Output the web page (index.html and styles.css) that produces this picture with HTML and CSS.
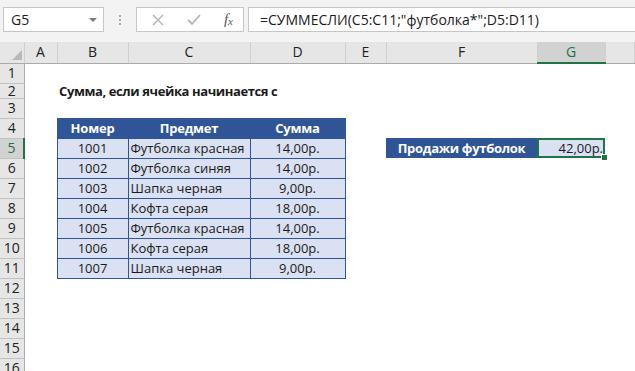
FILE: index.html
```html
<!DOCTYPE html>
<html lang="ru">
<head>
  <meta charset="UTF-8">
  <title>СУММЕСЛИ — начинается с</title>
  <link rel="stylesheet" href="styles.css">
</head>
<body>
  <div class="toolbar">
    <div class="namebox">
      <span>G5</span>
      <span class="caret"></span>
    </div>
    <div class="grip"><i></i><i></i><i></i></div>
    <div class="fbtns">
      <svg width="14" height="14" viewBox="0 0 14 14"><path d="M2 2 L12 12 M12 2 L2 12" stroke="#b4b4b4" stroke-width="1.4" fill="none"/></svg>
      <svg width="16" height="14" viewBox="0 0 16 14"><path d="M2 7 L6 11 L14 2" stroke="#b4b4b4" stroke-width="1.8" fill="none"/></svg>
      <span class="fx">f<sub>x</sub></span>
    </div>
    <div class="formula">=СУММЕСЛИ(C5:C11;"футболка*";D5:D11)</div>
  </div>

  <table class="sheet">
    <colgroup>
      <col class="c-rh">
      <col class="c-a">
      <col class="c-b">
      <col class="c-c">
      <col class="c-d">
      <col class="c-e">
      <col class="c-f">
      <col class="c-g">
      <col>
    </colgroup>
    <thead>
      <tr>
        <th class="corner"><span class="tri"></span></th>
        <th>A</th><th>B</th><th>C</th><th>D</th><th>E</th><th>F</th><th class="active">G</th><th></th>
      </tr>
    </thead>
    <tbody>
      <tr><th>1</th><td></td><td></td><td></td><td></td><td></td><td></td><td></td><td></td></tr>
      <tr class="short"><th>2</th><td></td><td class="title" colspan="3">Сумма, если ячейка начинается с</td><td></td><td></td><td></td><td></td></tr>
      <tr><th>3</th><td></td><td></td><td></td><td></td><td></td><td></td><td></td><td></td></tr>
      <tr><th>4</th><td></td><td class="t hd">Номер</td><td class="t hd">Предмет</td><td class="t hd">Сумма</td><td></td><td></td><td></td><td></td></tr>
      <tr><th class="active">5</th><td></td><td class="t ctr">1001</td><td class="t">Футболка красная</td><td class="t ctr">14,00р.</td><td></td><td class="label">Продажи футболок</td><td class="result">42,00р.<span class="handle"></span></td><td></td></tr>
      <tr><th>6</th><td></td><td class="t ctr">1002</td><td class="t">Футболка синяя</td><td class="t ctr">14,00р.</td><td></td><td></td><td></td><td></td></tr>
      <tr><th>7</th><td></td><td class="t ctr">1003</td><td class="t">Шапка черная</td><td class="t ctr">9,00р.</td><td></td><td></td><td></td><td></td></tr>
      <tr><th>8</th><td></td><td class="t ctr">1004</td><td class="t">Кофта серая</td><td class="t ctr">18,00р.</td><td></td><td></td><td></td><td></td></tr>
      <tr><th>9</th><td></td><td class="t ctr">1005</td><td class="t">Футболка красная</td><td class="t ctr">14,00р.</td><td></td><td></td><td></td><td></td></tr>
      <tr><th>10</th><td></td><td class="t ctr">1006</td><td class="t">Кофта серая</td><td class="t ctr">18,00р.</td><td></td><td></td><td></td><td></td></tr>
      <tr><th>11</th><td></td><td class="t ctr">1007</td><td class="t">Шапка черная</td><td class="t ctr">9,00р.</td><td></td><td></td><td></td><td></td></tr>
      <tr><th>12</th><td></td><td></td><td></td><td></td><td></td><td></td><td></td><td></td></tr>
      <tr><th>13</th><td></td><td></td><td></td><td></td><td></td><td></td><td></td><td></td></tr>
      <tr><th>14</th><td></td><td></td><td></td><td></td><td></td><td></td><td></td><td></td></tr>
      <tr><th>15</th><td></td><td></td><td></td><td></td><td></td><td></td><td></td><td></td></tr>
      <tr><th>16</th><td></td><td></td><td></td><td></td><td></td><td></td><td></td><td></td></tr>
    </tbody>
  </table>
</body>
</html>
```

FILE: styles.css
```css
body {
  margin: 0;
  width: 635px;
  height: 371px;
  overflow: hidden;
  background: #fff;
  font-family: "Open Sans", "Noto Sans", sans-serif;
  color: #1b1b1b;
}
.toolbar {
  height: 42px;
  background: #f3f3f3;
  display: flex;
  align-items: flex-start;
  padding-top: 7px;
  padding-left: 3px;
  box-sizing: border-box;
}
.namebox, .fbtns, .formula {
  height: 25px;
  background: #fff;
  border: 1px solid #c6c6c6;
  box-sizing: border-box;
  display: flex;
  align-items: center;
}
.namebox {
  width: 101px;
  padding: 0 6px 0 7px;
  justify-content: space-between;
  font-size: 14px;
}
.caret {
  width: 0;
  height: 0;
  border-left: 4px solid transparent;
  border-right: 4px solid transparent;
  border-top: 4px solid #7a7a7a;
}
.grip {
  width: 32px;
  height: 25px;
  display: flex;
  flex-direction: column;
  align-items: center;
  justify-content: center;
  gap: 2px;
}
.grip i {
  width: 2px;
  height: 2px;
  background: #a8a8a8;
}
.fbtns {
  width: 108px;
  padding: 0 10px 0 14px;
  justify-content: space-between;
}
.fx {
  font-family: "Liberation Serif", serif;
  font-style: italic;
  font-size: 15px;
  color: #555;
  line-height: 1;
}
.fx sub {
  font-size: 11px;
  vertical-align: -1px;
}
.formula {
  margin-left: 4px;
  flex: 1;
  border-right: none;
  padding-left: 11px;
  font-size: 14px;
  white-space: nowrap;
}

.sheet {
  border-collapse: collapse;
  table-layout: fixed;
  width: 635px;
  font-size: 13px;
}
.c-rh { width: 24px; }
.c-a { width: 33px; }
.c-b { width: 71px; }
.c-c { width: 122px; }
.c-d { width: 95px; }
.c-e { width: 41px; }
.c-f { width: 151px; }
.c-g { width: 68px; }

.sheet tr { height: 20px; }
.sheet tr.short { height: 15px; }
.sheet td, .sheet th {
  padding: 0 2px;
  white-space: nowrap;
  overflow: hidden;
  line-height: 14px;
}
.sheet tr.short th, .sheet tr.short td {
  line-height: 12px;
  overflow: visible;
}
.sheet thead th {
  background: #e6e6e6;
  border-right: 1px solid #d0d0d0;
  border-bottom: 1px solid #ababab;
  font-weight: normal;
  font-size: 14px;
  color: #222;
  height: 20px;
}
.sheet tbody th {
  background: #e6e6e6;
  border-right: 1px solid #ababab;
  border-bottom: 1px solid #c2c2c2;
  font-weight: normal;
  font-size: 14px;
  text-align: center;
  padding: 0;
  color: #222;
}
.sheet th.active {
  background: #d2d2d2;
  color: #217346;
}
.sheet thead th.active { border-bottom: 2px solid #217346; }
.sheet tbody th.active { border-right: 2px solid #217346; }
.corner {
  position: relative;
}
.tri {
  position: absolute;
  right: 2px;
  bottom: 3px;
  width: 0;
  height: 0;
  border-left: 10px solid transparent;
  border-bottom: 10px solid #b9b9b9;
}
.title {
  font-weight: bold;
  letter-spacing: -0.4px;
  padding-left: 4px;
}
.t {
  background: #d9e1f2;
  border: 1px solid #2f5597;
}
.t.hd {
  background: #2f5597;
  color: #fff;
  font-weight: bold;
  letter-spacing: -0.2px;
  text-align: center;
}
.ctr { text-align: center; }
.label {
  background: #2f5597;
  color: #fff;
  font-weight: bold;
  letter-spacing: -0.3px;
  text-align: center;
}
.result {
  background: #d9e1f2;
  text-align: right;
  padding-right: 6px;
  position: relative;
  overflow: visible !important;
  box-shadow: inset 0 0 0 2px #217346;
}
.handle {
  position: absolute;
  right: -3px;
  bottom: -3px;
  width: 5px;
  height: 5px;
  background: #217346;
  border: 1px solid #fff;
}
```
